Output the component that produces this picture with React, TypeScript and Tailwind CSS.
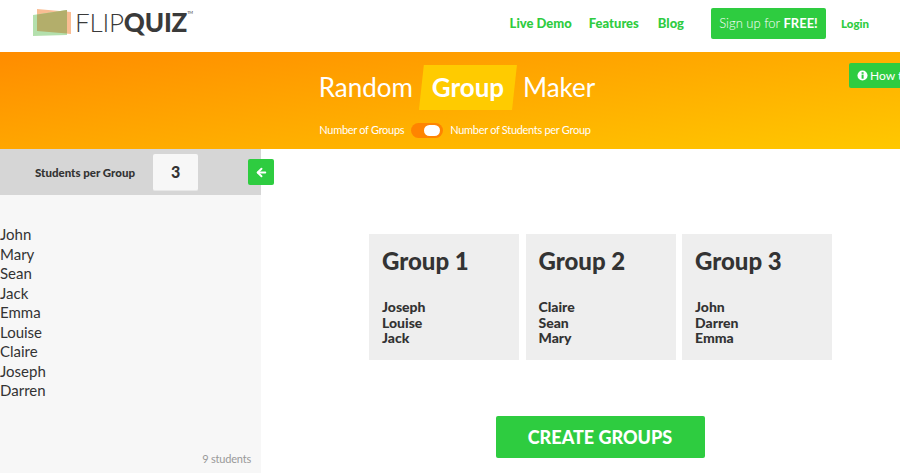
import { ArrowLeft } from 'lucide-react'

const STUDENTS = ['John', 'Mary', 'Sean', 'Jack', 'Emma', 'Louise', 'Claire', 'Joseph', 'Darren']

const GROUPS = [
  { name: 'Group 1', members: ['Joseph', 'Louise', 'Jack'] },
  { name: 'Group 2', members: ['Claire', 'Sean', 'Mary'] },
  { name: 'Group 3', members: ['John', 'Darren', 'Emma'] },
]

function Logo() {
  return (
    <div className="mb-[8px] flex items-center">
      <svg width="38" height="29" viewBox="0 0 38 29" className="shrink-0">
        <path d="M4 1 L38 4 L38 26 L4 23 Z" fill="#f9bd93" />
        <path d="M0 7 L34 2 L34 27 L0 28 Z" fill="#b4e0ad" />
        <path d="M4 6.4 L34 2 L34 3.6 L34 25.6 L4 23 Z" fill="#b3ae6b" />
      </svg>
      <span className="ml-[4px] flex items-start text-[26px] leading-none tracking-[-0.2px] text-[#3a3a3a]">
        <span className="font-light">FLIP</span>
        <span className="font-black">QUIZ</span>
        <span className="mt-[2px] text-[4px] leading-none">TM</span>
      </span>
    </div>
  )
}

function GroupCard({ name, members }: { name: string; members: string[] }) {
  return (
    <div className="h-[126px] w-[150px] bg-[#eeeeee] px-[13px] pt-[12px]">
      <h3 className="text-[24px] leading-[30px] font-black text-[#333333]">{name}</h3>
      <div className="mt-[23px] text-[14px] leading-[15.6px] font-black text-[#333333]">
        {members.map(m => (
          <p key={m}>{m}</p>
        ))}
      </div>
    </div>
  )
}

export default function App() {
  return (
    <div className="h-[473px] w-[900px] overflow-hidden bg-white font-['Lato',sans-serif]">
      {/* Nav */}
      <header className="flex h-[52px] items-center pl-[33px]">
        <Logo />
        <nav className="mb-[5px] ml-auto flex items-center pr-[31px] text-[13px] font-black text-[#2ecc40]">
          <a>Live Demo</a>
          <a className="ml-[17px]">Features</a>
          <a className="ml-[19px]">Blog</a>
          <a className="ml-[27px] flex h-[31px] w-[115px] items-center justify-center rounded-[2px] bg-[#2ecc40] text-[13px] font-light whitespace-nowrap text-white">
            Sign up for&nbsp;<b className="font-bold">FREE!</b>
          </a>
          <a className="ml-[15px] text-[11.5px]">Login</a>
        </nav>
      </header>

      {/* Banner */}
      <section className="relative flex h-[97px] flex-col items-center overflow-hidden bg-[linear-gradient(172deg,#ff8c00,#ffc800)] pt-[13px]">
        <div className="ml-[14px] flex h-[45px] items-center text-[26px] text-white">
          <span>Random</span>
          <span className="mx-[6px] flex h-[45px] w-[98px] items-center justify-center bg-[#ffcb00] font-bold [clip-path:polygon(5%_0,100%_0,95%_100%,0_100%)]">
            Group
          </span>
          <span>Maker</span>
        </div>
        <div className="mt-[12px] ml-[10px] flex items-center text-[11px] tracking-[-0.3px] text-white">
          <span>Number of Groups</span>
          <span className="mx-[7px] flex h-[15px] w-[32px] items-center justify-end rounded-full bg-[#ff8400] pr-[3px]">
            <span className="h-[11px] w-[16px] rounded-full bg-white" />
          </span>
          <span>Number of Students per Group</span>
        </div>
        <a className="absolute top-[11px] left-[849px] flex h-[25px] w-[60px] items-center gap-[2px] rounded-[2px] bg-[#2ecc40] pl-[8px] text-[12px] whitespace-nowrap text-white">
          <svg width="11" height="11" viewBox="0 0 12 12" className="shrink-0">
            <circle cx="6" cy="6" r="5.5" fill="#ffffff" />
            <rect x="5" y="5" width="2.2" height="4.5" fill="#2ecc40" />
            <rect x="5" y="2.4" width="2.2" height="1.8" fill="#2ecc40" />
          </svg>
          How to
        </a>
      </section>

      <div className="flex h-[324px]">
        {/* Student list */}
        <aside className="relative flex h-full w-[261px] shrink-0 flex-col bg-[#f7f7f7]">
          <div className="flex h-[46px] items-center bg-[#d6d6d6]">
            <span className="mt-[1px] ml-[35px] text-[11.5px] font-black text-[#333333]">Students per Group</span>
            <span className="ml-[18px] flex h-[37px] w-[45px] items-center justify-center rounded-[2px] border-b border-[#e8e8e8] bg-[#f7f7f7] text-[16px] font-black text-[#333333]">
              3
            </span>
          </div>
          <button className="absolute top-[10px] left-[248px] flex h-[26px] w-[26px] items-center justify-center rounded-[2px] bg-[#2ecc40] text-white">
            <ArrowLeft size={13} strokeWidth={3.5} />
          </button>
          <ul className="mt-[30px] text-[15px] leading-[19.5px] text-[#333333]">
            {STUDENTS.map(s => (
              <li key={s}>{s}</li>
            ))}
          </ul>
          <p className="mt-auto pr-[10px] pb-[6px] text-right text-[11px] tracking-[-0.2px] text-[#999999]">9 students</p>
        </aside>

        {/* Results */}
        <main className="flex flex-1 flex-col items-center pt-[85px] pl-[39px]">
          <div className="ml-[1px] flex gap-[6.5px]">
            {GROUPS.map(g => (
              <GroupCard key={g.name} name={g.name} members={g.members} />
            ))}
          </div>
          <button className="mt-[56px] flex h-[42px] w-[209px] items-center justify-center rounded-[2px] bg-[#2ecc40] text-[18px] font-black text-white">
            CREATE GROUPS
          </button>
        </main>
      </div>
    </div>
  )
}
